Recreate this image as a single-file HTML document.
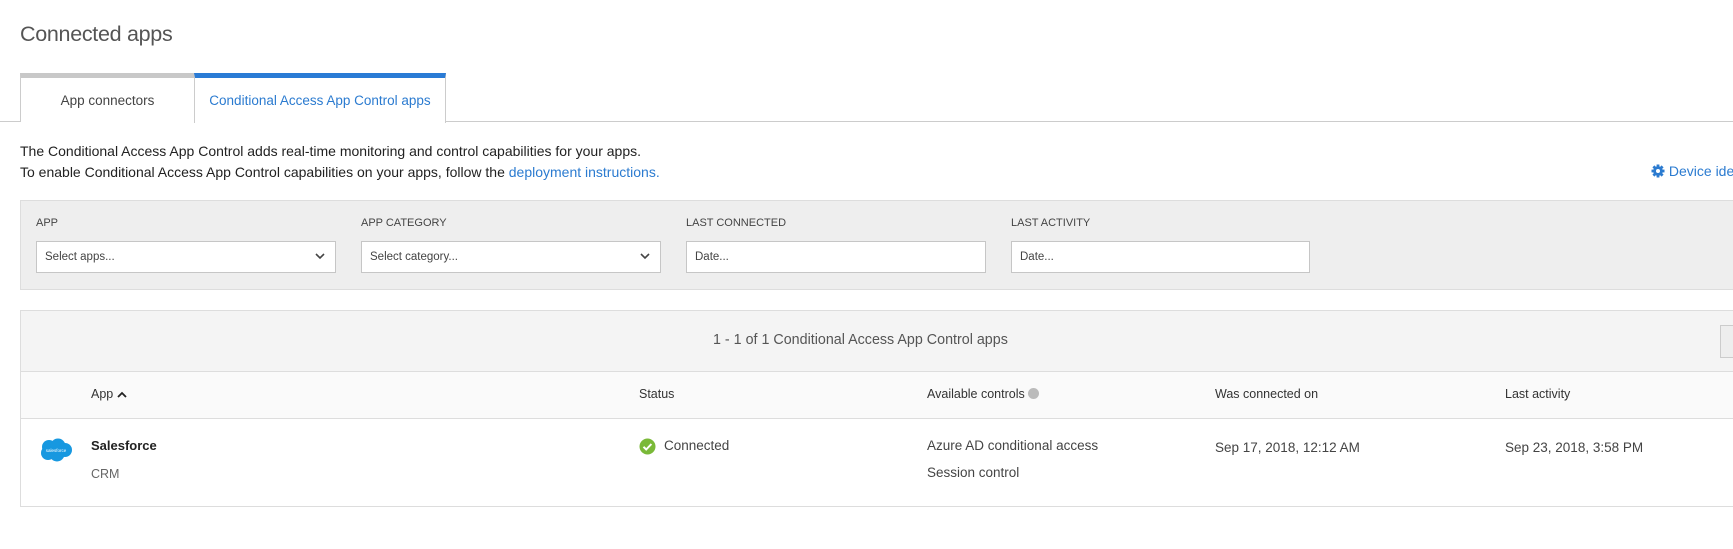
<!DOCTYPE html>
<html><head><meta charset="utf-8"><style>
*{box-sizing:border-box;margin:0;padding:0}
body{width:1733px;height:549px;overflow:hidden;background:#fff;font-family:"Liberation Sans",sans-serif;color:#333;position:relative}
.a{position:absolute;white-space:nowrap}
.title{left:20px;top:22px;font-size:21.5px;color:#555;letter-spacing:-0.3px}
.tab{position:absolute;top:73px;height:49px;border:1px solid #ccc;border-bottom:none;background:#fff;font-size:13.5px;text-align:center;line-height:46px}
.tabline{position:absolute;left:0;right:0;top:121px;height:1px;background:#ccc}
.desc{font-size:14px;color:#222}
.link{color:#2b7bd0}
.panel{position:absolute;left:20px;top:200px;width:1720px;height:90px;background:#eee;border:1px solid #ddd}
.lbl{font-size:11px;color:#444;top:217px}
.inp{position:absolute;top:241px;height:32px;background:#fff;border:1px solid #c6c6c6;font-size:11.5px;color:#444;padding-left:8px;line-height:30px}
.box{position:absolute;left:20px;top:310px;width:1720px;height:197px;border:1px solid #ddd}
.hd{font-size:12.5px;color:#333;top:387px}
.cell{font-size:13.5px;color:#444}
</style></head><body>
<div class="a title">Connected apps</div>
<div class="tabline"></div>
<div class="tab" style="left:20px;width:175px;border-top:5px solid #c8c8c8;color:#444">App connectors</div>
<div class="tab" style="left:194px;width:252px;border-top:5px solid #2a7bd5;color:#2b7bd0;height:50px">Conditional Access App Control apps</div>

<div class="a desc" style="left:20px;top:143px">The Conditional Access App Control adds real-time monitoring and control capabilities for your apps.</div>
<div class="a desc" style="left:20px;top:164px">To enable Conditional Access App Control capabilities on your apps, follow the <span class="link">deployment instructions.</span></div>
<div class="a desc link" style="left:1651px;top:163px"><svg width="14" height="14" viewBox="0 0 14 14" style="vertical-align:-2px"><g fill="#2b7bd0"><circle cx="7" cy="7" r="4.8"/><rect x="5.6" y="0.5" width="2.8" height="13"/><rect x="0.5" y="5.6" width="13" height="2.8"/><rect x="5.6" y="0.5" width="2.8" height="13" transform="rotate(45 7 7)"/><rect x="5.6" y="0.5" width="2.8" height="13" transform="rotate(-45 7 7)"/></g><circle cx="7" cy="7" r="2" fill="#fff"/></svg> Device ide</div>

<div class="panel"></div>
<div class="a lbl" style="left:36px">APP</div>
<div class="a lbl" style="left:361px">APP CATEGORY</div>
<div class="a lbl" style="left:686px">LAST CONNECTED</div>
<div class="a lbl" style="left:1011px">LAST ACTIVITY</div>
<div class="inp" style="left:36px;width:300px">Select apps...<svg class="a" style="right:10px;top:11px" width="10" height="7" viewBox="0 0 10 7"><path d="M1 1l4 4 4-4" stroke="#444" stroke-width="1.6" fill="none"/></svg></div>
<div class="inp" style="left:361px;width:300px">Select category...<svg class="a" style="right:10px;top:11px" width="10" height="7" viewBox="0 0 10 7"><path d="M1 1l4 4 4-4" stroke="#444" stroke-width="1.6" fill="none"/></svg></div>
<div class="inp" style="left:686px;width:300px">Date...</div>
<div class="inp" style="left:1011px;width:299px">Date...</div>

<div class="box">
 <div style="position:absolute;left:0;top:0;width:100%;height:61px;background:#f4f4f4;border-bottom:1px solid #ddd"></div>
 <div style="position:absolute;left:0;top:61px;width:100%;height:47px;background:#fafafa;border-bottom:1px solid #ddd"></div>
 <div style="position:absolute;left:1699px;top:14px;width:30px;height:33px;background:#eee;border:1px solid #ccc"></div>
</div>
<div class="a cell" style="left:713px;top:332px;color:#555;font-size:14.3px">1 - 1 of 1 Conditional Access App Control apps</div>
<div class="a hd" style="left:91px">App <svg width="10" height="7" viewBox="0 0 10 7"><path d="M1 6l4-4 4 4" stroke="#222" stroke-width="1.8" fill="none"/></svg></div>
<div class="a hd" style="left:639px">Status</div>
<div class="a hd" style="left:927px">Available controls <span style="display:inline-block;width:11px;height:11px;border-radius:50%;background:#bbb;vertical-align:-1px"></span></div>
<div class="a hd" style="left:1215px">Was connected on</div>
<div class="a hd" style="left:1505px">Last activity</div>

<svg class="a" style="left:39px;top:438px" width="34" height="25" viewBox="0 0 34 25"><g fill="#1798e0"><circle cx="10" cy="9" r="7"/><circle cx="19" cy="8" r="7.5"/><circle cx="26" cy="12" r="7"/><circle cx="9" cy="15" r="7"/><circle cx="18" cy="16" r="7.5"/></g><text x="17" y="14" font-size="4.5" fill="#fff" text-anchor="middle" font-family="Liberation Sans">salesforce</text></svg>
<div class="a cell" style="left:91px;top:438px;color:#222;font-weight:bold;font-size:13px">Salesforce</div>
<div class="a cell" style="left:91px;top:467px;color:#666;font-size:12.5px">CRM</div>
<svg class="a" style="left:639px;top:438px" width="17" height="17" viewBox="0 0 17 17"><circle cx="8.5" cy="8.5" r="8" fill="#7ab938"/><path d="M4.5 8.8l2.7 2.7 5.2-5.5" stroke="#fff" stroke-width="2" fill="none"/></svg>
<div class="a cell" style="left:664px;top:438px">Connected</div>
<div class="a cell" style="left:927px;top:438px">Azure AD conditional access</div>
<div class="a cell" style="left:927px;top:465px">Session control</div>
<div class="a cell" style="left:1215px;top:440px">Sep 17, 2018, 12:12 AM</div>
<div class="a cell" style="left:1505px;top:440px">Sep 23, 2018, 3:58 PM</div>
</body></html>
